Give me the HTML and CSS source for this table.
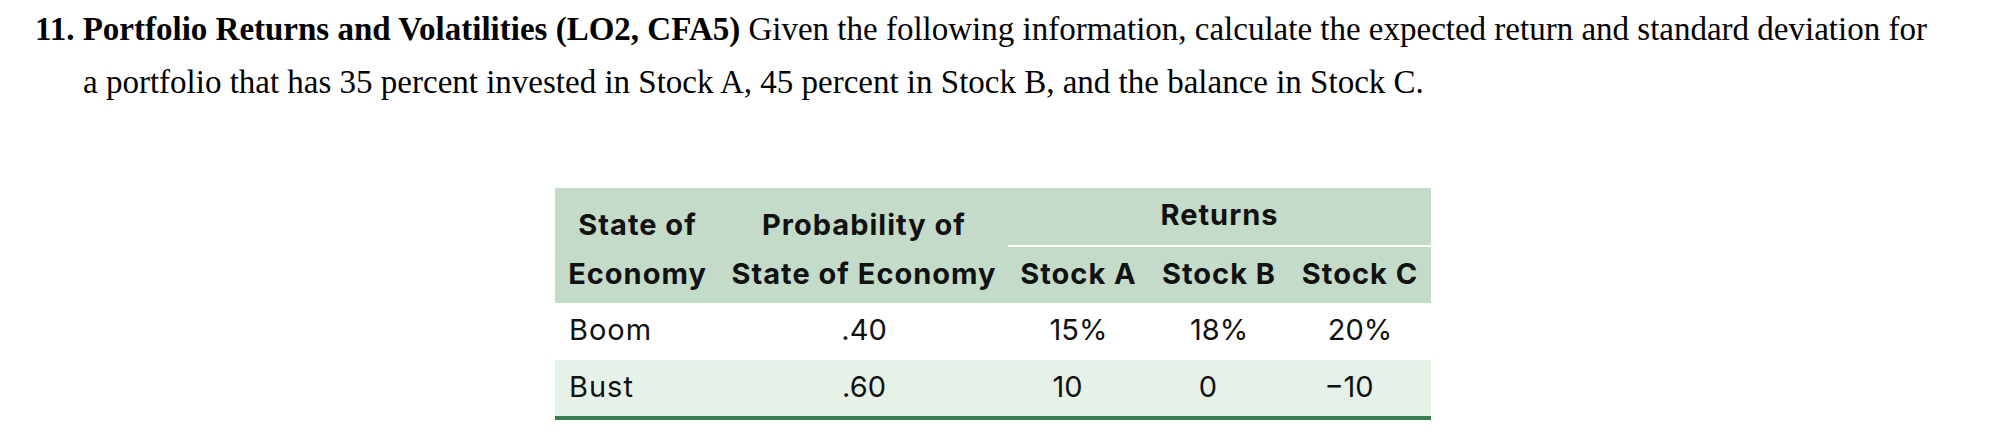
FILE: index.html
```html
<!DOCTYPE html>
<html>
<head>
<meta charset="utf-8">
<link rel="stylesheet" href="styles.css">
</head>
<body>
<div class="page">
  <p class="problem"><span class="lead">11. Portfolio Returns and Volatilities (LO2, CFA5)</span> Given the following information, calculate the expected return and standard deviation for a portfolio that has 35 percent invested in Stock A, 45 percent in Stock B, and the balance in Stock C.</p>
  <table class="data">
    <colgroup>
      <col class="c1"><col class="c2"><col class="c3"><col class="c4"><col class="c5">
    </colgroup>
    <thead>
      <tr class="h1">
        <th class="low">State of</th>
        <th class="low">Probability of</th>
        <th class="ret" colspan="3">Returns</th>
      </tr>
      <tr class="h2">
        <th>Economy</th>
        <th>State of Economy</th>
        <th>Stock A</th>
        <th>Stock B</th>
        <th>Stock C</th>
      </tr>
    </thead>
    <tbody>
      <tr class="r1">
        <td class="name">Boom</td>
        <td class="num">.40</td>
        <td class="num">15%</td>
        <td class="num">18%</td>
        <td class="num">20%</td>
      </tr>
      <tr class="r2">
        <td class="name">Bust</td>
        <td class="num">.60</td>
        <td class="num nopct">10</td>
        <td class="num nopct">0</td>
        <td class="num nopct">&minus;10</td>
      </tr>
    </tbody>
  </table>
</div>
</body>
</html>
```

FILE: styles.css
```css
html, body {
  margin: 0;
  padding: 0;
  background: #ffffff;
}

.page {
  padding: 3px 0 0 35px;
}

.problem {
  margin: 0;
  width: 1860px;
  padding-left: 48px;
  text-indent: -48px;
  font-family: "Liberation Serif", "Times New Roman", serif;
  font-size: 33px;
  line-height: 53px;
  color: #000;
}

.lead {
  font-weight: bold;
}

.data {
  margin: 79px 0 0 520px;
  border-collapse: separate;
  border-spacing: 0;
  table-layout: fixed;
  width: 876px;
  font-family: Inter, "Liberation Sans", sans-serif;
  font-size: 29px;
  letter-spacing: 1px;
  color: #111;
}

.c1 { width: 165px; }
.c2 { width: 288px; }
.c3 { width: 141px; }
.c4 { width: 140px; }
.c5 { width: 142px; }

.data th {
  background: #c3dbc8;
  font-weight: 700;
  text-align: center;
  padding: 0;
  line-height: 34px;
  white-space: nowrap;
}

.h1 th.low {
  height: 54px;
  vertical-align: bottom;
  padding-bottom: 5px;
}

.h1 th.ret {
  vertical-align: top;
  padding-top: 10px;
  height: 47px;
  border-bottom: 2px solid #ffffff;
}

.h2 th {
  height: 54px;
  padding-bottom: 2px;
  vertical-align: middle;
}

.data td {
  text-align: center;
  padding: 0 0 3px 0;
  line-height: 34px;
  vertical-align: middle;
}

.data td.num {
  letter-spacing: 0;
}

.data td.nopct {
  padding-right: 22px;
}

.data td.name {
  text-align: left;
  padding-left: 14px;
}

.r1 td {
  height: 54px;
  background: #ffffff;
}

.r2 td {
  height: 53px;
  background: #e6f1e8;
  border-bottom: 4px solid #3b7d4f;
}
```
